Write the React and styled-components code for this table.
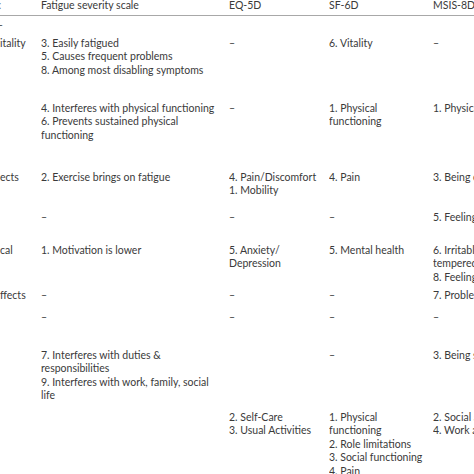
import styled, { createGlobalStyle } from "styled-components";

const Global = createGlobalStyle`
	html, body {
		margin: 0;
		padding: 0;
		background: #fff;
		overflow: hidden;
	}
	body {
		width: 474px;
		height: 474px;
	}
`;

const Table = styled.div`
	display: flex;
	flex-direction: column;
	font-family: Lato, "Open Sans", sans-serif;
	font-size: 10.5px;
	line-height: 13.5px;
	color: #3a3a3a;
	width: 474px;
	overflow: hidden;
`;

const Row = styled.div`
	display: grid;
	grid-template-columns: 41px 188px 100px 104px 120px;
	margin-top: ${p => p.$gap || 0}px;
	${p => p.$head && `
		margin-top: -1px;
		padding-bottom: 2px;
		border-bottom: 1px solid #a8a8a8;
	`}
`;

const Cell = styled.div`
	padding-right: ${p => p.$pad ?? 6}px;
	overflow: hidden;
	white-space: ${p => (p.$nowrap ? "pre" : "pre-line")};
`;

const Lead = styled.span`
	display: block;
	white-space: nowrap;
	margin-left: ${p => p.$clip || 0}px;
`;

const Item = styled.div`
	white-space: inherit;
`;

const rows = [
	{ gap: 3, lead: "–", clip: -3, fss: [], eq: [], sf: [], msis: [] },
	{
		gap: 4.5,
		lead: "itality",
		fss: ["3. Easily fatigued", "5. Causes frequent problems", "8. Among most disabling symptoms"],
		eq: ["–"],
		sf: ["6. Vitality"],
		msis: ["–"],
	},
	{
		gap: 24.5,
		lead: "",
		fss: ["4. Interferes with physical functioning", "6. Prevents sustained physical\nfunctioning"],
		eq: ["–"],
		sf: ["1. Physical\nfunctioning"],
		msis: ["1. Physical activities"],
	},
	{
		gap: 28.5,
		lead: "ects",
		fss: ["2. Exercise brings on fatigue"],
		eq: ["4. Pain/Discomfort", "1. Mobility"],
		sf: ["4. Pain"],
		msis: ["3. Being clumsy"],
	},
	{ gap: 13, lead: "", fss: ["–"], eq: ["–"], sf: ["–"], msis: ["5. Feeling unwell"] },
	{
		gap: 19.5,
		lead: "cal",
		fss: ["1. Motivation is lower"],
		eq: ["5. Anxiety/\nDepression"],
		sf: ["5. Mental health"],
		msis: ["6. Irritable/bad\ntempered", "8. Feeling depressed"],
	},
	{ gap: 4.5, lead: "ffects", fss: ["–"], eq: ["–"], sf: ["–"], msis: ["7. Problems sleeping"] },
	{ gap: 8.5, lead: "", fss: ["–"], eq: ["–"], sf: ["–"], msis: ["–"] },
	{
		gap: 24.5,
		lead: "",
		fss: ["7. Interferes with duties &\nresponsibilities", "9. Interferes with work, family, social\nlife"],
		eq: [],
		sf: ["–"],
		msis: ["3. Being stuck at home"],
	},
	{
		gap: 8,
		lead: "",
		fss: [],
		eq: ["2. Self-Care", "3. Usual Activities"],
		sf: ["1. Physical\nfunctioning", "2. Role limitations", "3. Social functioning", "4. Pain"],
		msis: ["2. Social activities", "4. Work at home"],
	},
];

function Items({ list }) {
	return list.map((t, i) => <Item key={i}>{t}</Item>);
}

export default function App() {
	return (
		<>
			<Global />
			<Table>
				<Row $head>
					<Cell $pad={0}><Lead $clip={-4}>c</Lead></Cell>
					<Cell>Fatigue severity scale</Cell>
					<Cell>EQ-5D</Cell>
					<Cell>SF-6D</Cell>
					<Cell $nowrap>MSIS-8D</Cell>
				</Row>
				{rows.map((r, i) => (
					<Row key={i} $gap={r.gap}>
						<Cell $pad={0}><Lead $clip={r.clip}>{r.lead}</Lead></Cell>
						<Cell><Items list={r.fss} /></Cell>
						<Cell><Items list={r.eq} /></Cell>
						<Cell><Items list={r.sf} /></Cell>
						<Cell $nowrap><Items list={r.msis} /></Cell>
					</Row>
				))}
			</Table>
		</>
	);
}
